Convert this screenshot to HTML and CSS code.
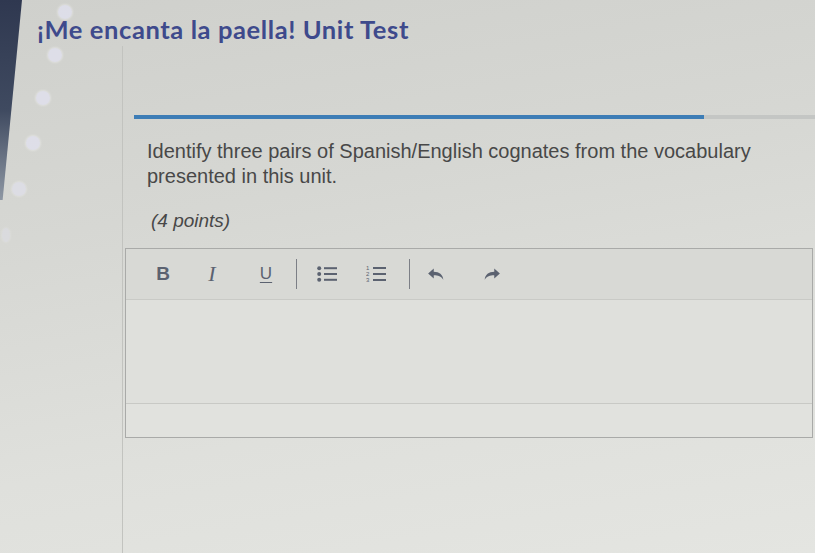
FILE: index.html
```html
<!DOCTYPE html>
<html lang="en">
<head>
<meta charset="utf-8">
<title>Unit Test</title>
<link rel="stylesheet" href="styles.css">
</head>
<body>
<div class="bezel"></div>
<div class="glare g1"></div>
<div class="glare g2"></div>
<div class="glare g3"></div>
<div class="glare g4"></div>
<div class="glare g5"></div>
<div class="glare g6"></div>
<div class="page">
  <h1 class="title">¡Me encanta la paella! Unit Test</h1>
  <div class="content">
    <div class="progress"><div class="progress-fill"></div></div>
    <div class="question">
      <p class="prompt">Identify three pairs of Spanish/English cognates from the vocabulary presented in this unit.</p>
      <p class="points">(4 points)</p>
    </div>
    <div class="editor">
      <div class="toolbar">
        <span class="tool bold">B</span>
        <span class="tool italic">I</span>
        <span class="tool underline">U</span>
        <span class="sep"></span>
        <span class="tool icon">
          <svg width="20" height="16" viewBox="0 0 20 16"><circle cx="2.2" cy="2.2" r="2" fill="#5b6270"/><circle cx="2.2" cy="8" r="2" fill="#5b6270"/><circle cx="2.2" cy="13.8" r="2" fill="#5b6270"/><rect x="7" y="1.2" width="13" height="2" fill="#5b6270"/><rect x="7" y="7" width="13" height="2" fill="#5b6270"/><rect x="7" y="12.8" width="13" height="2" fill="#5b6270"/></svg>
        </span>
        <span class="tool icon num">
          <svg width="20" height="18" viewBox="0 0 20 18"><text x="0" y="5" font-size="6" font-family="Liberation Sans, Arial, sans-serif" fill="#5b6270">1</text><text x="0" y="11" font-size="6" font-family="Liberation Sans, Arial, sans-serif" fill="#5b6270">2</text><text x="0" y="17" font-size="6" font-family="Liberation Sans, Arial, sans-serif" fill="#5b6270">3</text><rect x="7" y="2" width="13" height="2" fill="#5b6270"/><rect x="7" y="8" width="13" height="2" fill="#5b6270"/><rect x="7" y="14" width="13" height="2" fill="#5b6270"/></svg>
        </span>
        <span class="sep"></span>
        <span class="tool icon undo">
          <svg width="18" height="14" viewBox="0 0 16 12"><path d="M6 1 L1 5.5 L6 10 L6 7 C10 7 12.5 8 14.5 11 C14 6.5 11 4 6 4 Z" fill="#5b6270"/></svg>
        </span>
        <span class="tool icon redo">
          <svg width="18" height="14" viewBox="0 0 16 12"><path d="M10 1 L15 5.5 L10 10 L10 7 C6 7 3.5 8 1.5 11 C2 6.5 5 4 10 4 Z" fill="#5b6270"/></svg>
        </span>
      </div>
      <div class="editor-body"></div>
      <div class="editor-foot"></div>
    </div>
  </div>
</div>
</body>
</html>
```
FILE: styles.css
```css
html, body {
  margin: 0;
  padding: 0;
}
body {
  width: 815px;
  height: 553px;
  overflow: hidden;
  position: relative;
  background: linear-gradient(170deg, #cfd0cc 0%, #d6d7d3 35%, #dfe0dc 70%, #e4e5e1 100%);
  font-family: "Liberation Sans", Arial, sans-serif;
}
.bezel {
  position: absolute;
  left: 0;
  top: 0;
  width: 22px;
  height: 200px;
  background: linear-gradient(180deg, #2f3850 0%, #3f4a60 55%, #8e97a3 100%);
  clip-path: polygon(0 0, 100% 0, 12% 100%, 0 100%);
}
.glare {
  position: absolute;
  width: 14px;
  height: 14px;
  border-radius: 50%;
  background: rgba(226, 226, 240, 0.75);
  box-shadow: 0 0 3px rgba(255, 255, 255, 0.7);
}
.g1 { left: 58px; top: 5px; }
.g2 { left: 48px; top: 48px; }
.g3 { left: 36px; top: 91px; }
.g4 { left: 26px; top: 136px; }
.g5 { left: 12px; top: 182px; opacity: 0.8; }
.g6 { left: 2px; top: 228px; width: 8px; opacity: 0.5; }
.page {
  padding-top: 12px;
}
.title {
  margin: 0 0 0 37px;
  font-family: Lato, "Open Sans", sans-serif;
  font-weight: 700;
  font-size: 25.5px;
  line-height: 34px;
  color: #3e4a8c;
  letter-spacing: 0.6px;
}
.content {
  margin-left: 122px;
  padding-top: 69px;
  border-left: 1px solid #c2c3bf;
  height: 438px;
}
.progress {
  margin-left: 11px;
  height: 4px;
  background: #c4c6c4;
}
.progress-fill {
  width: 570px;
  height: 100%;
  background: #3d7db6;
}
.question {
  padding-left: 24px;
  padding-top: 20px;
  color: #484848;
}
.prompt {
  margin: 0;
  width: 625px;
  font-size: 20px;
  line-height: 25px;
}
.points {
  margin: 20px 0 0 4px;
  font-size: 19px;
  font-style: italic;
  line-height: 24px;
}
.editor {
  margin-top: 15px;
  margin-left: 2px;
  width: 686px;
  border: 1px solid #a9aaa8;
  background: #dfe0dc;
}
.toolbar {
  height: 50px;
  display: flex;
  align-items: center;
  padding-left: 30px;
  background: #d8d9d5;
  border-bottom: 1px solid #c9cac6;
}
.tool {
  color: #5b6270;
  font-size: 19px;
  display: flex;
  align-items: center;
  justify-content: center;
}
.bold {
  font-weight: 700;
  width: 14px;
}
.italic {
  font-family: "Liberation Serif", "Times New Roman", serif;
  font-style: italic;
  font-size: 22px;
  margin-left: 35px;
  width: 14px;
}
.underline {
  text-decoration: underline;
  text-underline-offset: 3px;
  font-size: 17px;
  margin-left: 40px;
  width: 14px;
}
.sep {
  width: 1px;
  height: 30px;
  background: #7c7f86;
  margin-left: 23px;
}
.icon {
  margin-left: 20px;
}
.num {
  margin-left: 29px;
}
.sep + .icon {
  margin-left: 20px;
}
.sep + .undo {
  margin-left: 17px;
}
.redo {
  margin-left: 38px;
}
.editor-body {
  height: 103px;
  background: #dfe0dc;
  border-bottom: 1px solid #c8c9c5;
}
.editor-foot {
  height: 33px;
  background: #e1e2de;
}
```
